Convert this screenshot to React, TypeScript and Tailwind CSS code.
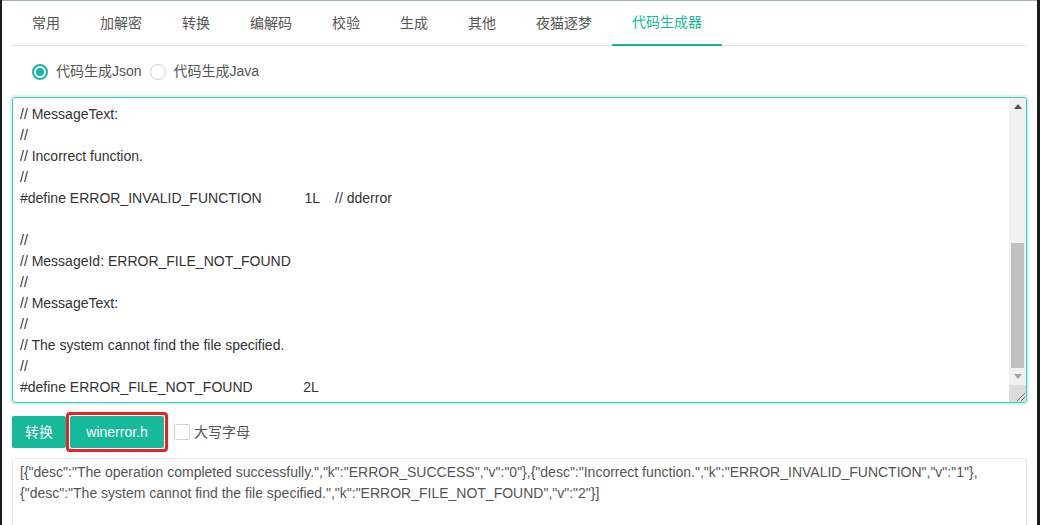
import React from 'react';

const FONT = '"Liberation Sans", Arial, "Noto Sans CJK SC", sans-serif';

const tabs = ['常用', '加解密', '转换', '编解码', '校验', '生成', '其他', '夜猫逐梦', '代码生成器'];

const codeLines = [
  '// MessageText:',
  '//',
  '// Incorrect function.',
  '//',
  '#define ERROR_INVALID_FUNCTION           1L    // dderror',
  '',
  '//',
  '// MessageId: ERROR_FILE_NOT_FOUND',
  '//',
  '// MessageText:',
  '//',
  '// The system cannot find the file specified.',
  '//',
  '#define ERROR_FILE_NOT_FOUND             2L',
];

function Radio({ checked, label }: { checked?: boolean; label: string }) {
  return (
    <div className="flex items-center">
      <span
        className={`flex h-4 w-4 items-center justify-center rounded-full border ${
          checked ? 'border-2 border-[#16b999]' : 'border-[#d2d2d2]'
        }`}
      >
        {checked && <span className="h-2 w-2 rounded-full bg-[#16b999]" />}
      </span>
      <span className="ml-2 text-[14px] text-[#555]">{label}</span>
    </div>
  );
}

function FakeScrollbar() {
  return (
    <div className="flex w-[17px] flex-col bg-[#f1f1f1]">
      <div className="flex h-[17px] items-center justify-center">
        <svg width="8" height="5" viewBox="0 0 8 5">
          <path d="M0 5 L4 0 L8 5 Z" fill="#505050" />
        </svg>
      </div>
      <div className="flex flex-1 flex-col justify-end">
        <div className="mx-[2px] h-[125px] bg-[#c1c1c1]" />
      </div>
      <div className="flex h-[17px] items-center justify-center">
        <svg width="8" height="5" viewBox="0 0 8 5">
          <path d="M0 0 L8 0 L4 5 Z" fill="#a3a3a3" />
        </svg>
      </div>
      <div className="flex h-[17px] items-end justify-end bg-[#dcdcdc]">
        <svg width="12" height="12" viewBox="0 0 12 12">
          <path d="M11 3 L3 11 M11 7 L7 11" stroke="#777" strokeWidth="1" />
        </svg>
      </div>
    </div>
  );
}

export default function App() {
  return (
    <div className="flex h-[525px] w-[1040px] overflow-hidden bg-white" style={{ fontFamily: FONT }}>
      <div className="w-[2px] shrink-0 bg-[#1c1c1c]" />
      <div className="flex flex-1 flex-col border-t border-[#9db59b] px-[10px]">
        {/* tabs */}
        <div className="flex shrink-0 border-b border-[#e2e2e2]">
          {tabs.map((t, i) => {
            const active = i === tabs.length - 1;
            return (
              <div
                key={t}
                className={`flex items-center px-5 text-[14px] ${
                  active
                    ? '-mb-px h-[45px] border-b-2 border-[#16b999] text-[#16b999]'
                    : 'h-[44px] text-[#555]'
                }`}
              >
                {t}
              </div>
            );
          })}
        </div>

        {/* radios */}
        <div className="flex h-[51px] shrink-0 items-center gap-2 pl-5">
          <Radio checked label="代码生成Json" />
          <Radio label="代码生成Java" />
        </div>

        {/* source textarea */}
        <div className="flex h-[306px] shrink-0 overflow-hidden rounded-[3px] border border-[#3fcaae] shadow-[0_0_0_2px_rgba(22,185,153,0.15)]">
          <div className="flex-1 overflow-hidden pl-[7px] pt-[6px] text-[14px] leading-[21px] text-[#333]">
            {codeLines.map((l, i) => (
              <div key={i} className="h-[21px] whitespace-pre">
                {l}
              </div>
            ))}
          </div>
          <FakeScrollbar />
        </div>

        {/* actions */}
        <div className="mt-[9px] flex shrink-0 items-center">
          <button className="h-8 rounded-[2px] bg-[#16b999] px-[13px] text-[14px] text-white">转换</button>
          <span className="rounded-[4px] border-[3px] border-[#e8231f] p-px">
            <span className="flex h-8 w-[94px] items-center justify-center rounded-[2px] bg-[#16b999] text-[14px] text-white">
              winerror.h
            </span>
          </span>
          <label className="ml-[6px] flex items-center">
            <span className="h-4 w-4 rounded-[2px] border border-[#d2d2d2] bg-white" />
            <span className="ml-1 text-[14px] text-[#555]">大写字母</span>
          </label>
        </div>

        {/* output */}
        <div className="mt-[6px] h-[100px] shrink-0 rounded-[3px] border border-[#e6e6e6] pl-[7px] pt-[3px] text-[14px] leading-[21px] text-[#555]">
          <div className="whitespace-pre">
            {'[{"desc":"The operation completed successfully.","k":"ERROR_SUCCESS","v":"0"},{"desc":"Incorrect function.","k":"ERROR_INVALID_FUNCTION","v":"1"},'}
          </div>
          <div className="whitespace-pre">
            {'{"desc":"The system cannot find the file specified.","k":"ERROR_FILE_NOT_FOUND","v":"2"}]'}
          </div>
        </div>
      </div>
      <div className="w-[3px] shrink-0 bg-[#1c1c1c]" />
    </div>
  );
}
